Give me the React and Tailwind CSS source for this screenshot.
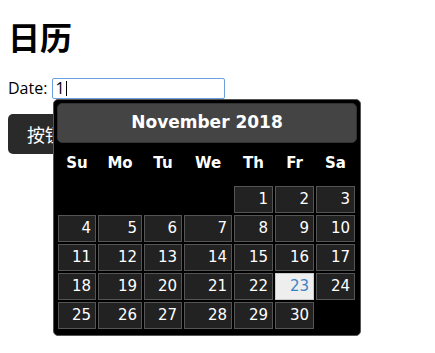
import React from 'react';

const weeks = [
    [null, null, null, null, 1, 2, 3],
    [4, 5, 6, 7, 8, 9, 10],
    [11, 12, 13, 14, 15, 16, 17],
    [18, 19, 20, 21, 22, 23, 24],
    [25, 26, 27, 28, 29, 30, null],
];

const dayNames = ['Su', 'Mo', 'Tu', 'We', 'Th', 'Fr', 'Sa'];

const App = () => {
    return (
        <div className="relative min-h-[353px] bg-white px-2 font-['Segoe_UI','Open_Sans','Noto_Sans_CJK_SC',sans-serif] text-black">
            <h1 className="pt-[14px] text-[32px] font-bold leading-[44px] font-['Noto_Sans_CJK_SC',sans-serif]">日历</h1>

            <div className="mt-[19px] flex items-center h-[22px] text-[16px]">
                <span className="mr-[5px]">Date:</span>
                <div className="w-[173px] h-[21px] border border-[#6c9fe0] rounded-[2px] flex items-center pl-[2px] text-[16px] leading-none">
                    <span>1</span>
                    <span className="inline-block w-px h-[15px] bg-black ml-px"></span>
                </div>
            </div>

            <button className="mt-[15px] h-[40px] px-[19px] rounded-[5px] bg-[#2a2a2a] text-white text-[18px] font-['Noto_Sans_CJK_SC',sans-serif]">
                按钮
            </button>

            {/* datepicker popup */}
            <div className="absolute left-[53px] top-[99px] w-[308px] bg-black border border-[#555] rounded-[5px] px-[3px] pt-[3px] pb-[6px] font-['DejaVu_Sans',Verdana,sans-serif]">
                <div className="h-[40px] bg-[#444] border border-[#333] rounded-[5px] flex items-center justify-center text-white text-[17px] font-bold">
                    November 2018
                </div>
                <div className="grid grid-cols-[38px_44px_38px_48px_39px_39px_39px] gap-[2px] px-[1px]">
                    {dayNames.map(d => (
                        <div key={d} className="h-[41px] flex items-center justify-center text-white text-[15px] font-bold">{d}</div>
                    ))}
                    {weeks.flat().map((n, i) => (
                        n === null ? (
                            <div key={i} className="h-[27px]"></div>
                        ) : n === 23 ? (
                            <div key={i} className="h-[27px] bg-[#eee] border border-[#ccc] flex items-center justify-end pr-[4px] text-[15px] text-[#3a83c6]">{n}</div>
                        ) : (
                            <div key={i} className="h-[27px] bg-[#222] border border-[#555] flex items-center justify-end pr-[4px] text-[15px] text-white">{n}</div>
                        )
                    ))}
                </div>
            </div>
        </div>
    );
};

export default App;
